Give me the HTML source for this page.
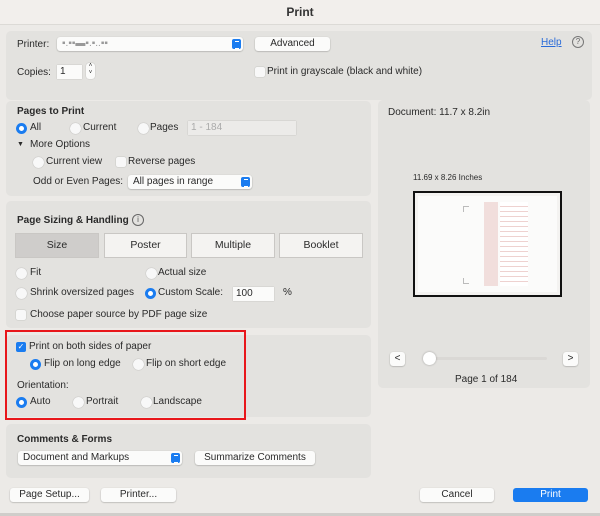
<!DOCTYPE html>
<html><head><meta charset="utf-8"><style>
*{box-sizing:border-box;margin:0;padding:0}
body{width:600px;height:516px;background:#eceae7;font-family:"Liberation Sans",sans-serif;font-size:10px;color:#2a2a2a;position:relative;overflow:hidden}
.a{position:absolute;white-space:nowrap}
.title{left:0;top:0;width:600px;height:25px;background:#f2efec;border-bottom:1px solid #dcdad6;text-align:center;line-height:24px;font-size:12px;font-weight:bold;color:#333}
.p{position:absolute;background:#e3e2df;border-radius:5px}
.b{font-weight:bold}
.btn{position:absolute;background:#fbfbfa;border-radius:3px;box-shadow:0 0.5px 1.5px rgba(0,0,0,.3);text-align:center;line-height:14px;height:14px}
.r{position:absolute;width:11px;height:11px;border-radius:50%;background:#f8f8f8;box-shadow:0 0 1px rgba(0,0,0,.35)}
.r.on{background:#fff;border:3.5px solid #1a7cf0;box-shadow:none}
.cb{position:absolute;width:10px;height:10px;border-radius:2px;background:#f8f8f8;box-shadow:0 0 1px rgba(0,0,0,.35)}
.inp{position:absolute;background:#fbfbfa;height:14px;line-height:14px;padding-left:3px;box-shadow:0 0 1px rgba(0,0,0,.25)}
.sel{position:absolute;background:#fbfbfa;border-radius:3px;height:14px;line-height:14px;padding-left:5px;box-shadow:0 0.5px 1.5px rgba(0,0,0,.3)}
.sel i{position:absolute;right:2px;top:2px;width:9px;height:10px;background:#1a7cf0;border-radius:2px}
.sel i:after{content:"";position:absolute;left:2.5px;top:2px;width:4px;height:6px;border-top:1px solid #fff;border-bottom:1px solid #fff}
.seg{position:absolute;top:233px;height:25px;background:#f4f3f1;border:1px solid #c9c7c4;text-align:center;line-height:23px;font-size:10.5px}
</style></head><body>
<div class="a title">Print</div>

<div class="p" style="left:6px;top:31px;width:586px;height:69px"></div>
<div class="a" style="left:17px;top:39px">Printer:</div>
<div class="sel" style="left:57px;top:37px;width:186px;color:#999">▪.▪▪▬▪.▪..▪▪<i></i></div>
<div class="btn" style="left:255px;top:37px;width:75px">Advanced</div>
<div class="a" style="left:541px;top:37px;color:#2a6bd8;text-decoration:underline">Help</div>
<div class="a" style="left:572px;top:36px;width:12px;height:12px;border:1px solid #777;border-radius:50%;font-size:8px;text-align:center;line-height:10px;color:#666">?</div>
<div class="a" style="left:17px;top:67px">Copies:</div>
<div class="inp" style="left:57px;top:65px;width:25px">1</div>
<div class="a" style="left:86px;top:63px;width:9px;height:16px;background:#fbfbfa;border-radius:3px;font-size:6px;line-height:7px;text-align:center;box-shadow:0 0 1px rgba(0,0,0,.3)">˄<br>˅</div>
<div class="cb" style="left:255px;top:67px"></div>
<div class="a" style="left:267px;top:66px">Print in grayscale (black and white)</div>

<div class="p" style="left:6px;top:101px;width:365px;height:95px"></div>
<div class="a b" style="left:17px;top:106px">Pages to Print</div>
<div class="r on" style="left:16px;top:123px"></div><div class="a" style="left:30px;top:122px">All</div>
<div class="r" style="left:70px;top:123px"></div><div class="a" style="left:83px;top:122px">Current</div>
<div class="r" style="left:138px;top:123px"></div><div class="a" style="left:150px;top:122px">Pages</div>
<div class="inp" style="left:188px;top:121px;width:108px;color:#aaa;background:#ecebe9">1 - 184</div>
<div class="a" style="left:17px;top:141px;font-size:7px">▼</div><div class="a" style="left:30px;top:139px">More Options</div>
<div class="r" style="left:33px;top:157px"></div><div class="a" style="left:46px;top:156px">Current view</div>
<div class="cb" style="left:116px;top:157px"></div><div class="a" style="left:128px;top:156px">Reverse pages</div>
<div class="a" style="left:33px;top:176px">Odd or Even Pages:</div>
<div class="sel" style="left:128px;top:175px;width:124px">All pages in range<i></i></div>

<div class="p" style="left:378px;top:100px;width:212px;height:288px"></div>
<div class="a" style="left:388px;top:107px">Document: 11.7 x 8.2in</div>
<div class="a" style="left:413px;top:173px;font-size:8px">11.69 x 8.26 Inches</div>
<div class="a" style="left:413px;top:191px;width:149px;height:106px;border:2px solid #111;background:#f4f3f1;padding:3px">
 <div style="width:100%;height:100%;background:#fbfbfa;position:relative">
  <div style="position:absolute;left:45px;top:10px;width:6px;height:6px;border-left:1px solid #bbb;border-top:1px solid #bbb"></div>
  <div style="position:absolute;left:45px;top:82px;width:6px;height:6px;border-left:1px solid #bbb;border-bottom:1px solid #bbb"></div>
  <div style="position:absolute;left:66px;top:6px;width:14px;height:84px;background:#f1dedc"></div>
  <div style="position:absolute;left:82px;top:6px;width:28px;height:84px;background:repeating-linear-gradient(#fff 0 4px,#eed2d0 4px 5px)"></div>
 </div></div>
<div class="btn" style="left:390px;top:352px;width:15px">&lt;</div>
<div class="a" style="left:425px;top:357px;width:122px;height:3px;background:#dad8d5;border-radius:2px"></div>
<div class="a" style="left:423px;top:352px;width:13px;height:13px;border-radius:50%;background:#fff;box-shadow:0 0 2px rgba(0,0,0,.3)"></div>
<div class="btn" style="left:563px;top:352px;width:15px">&gt;</div>
<div class="a" style="left:455px;top:374px">Page 1 of 184</div>

<div class="p" style="left:6px;top:201px;width:365px;height:127px"></div>
<div class="a b" style="left:17px;top:215px">Page Sizing &amp; Handling</div>
<div class="a" style="left:132px;top:214px;width:12px;height:12px;border:1px solid #666;border-radius:50%;font-size:8px;text-align:center;line-height:10px;color:#555">i</div>
<div class="seg" style="left:15px;width:84px;background:#cfcdcb">Size</div>
<div class="seg" style="left:104px;width:83px">Poster</div>
<div class="seg" style="left:191px;width:84px">Multiple</div>
<div class="seg" style="left:279px;width:84px">Booklet</div>
<div class="r" style="left:16px;top:268px"></div><div class="a" style="left:30px;top:267px">Fit</div>
<div class="r" style="left:146px;top:268px"></div><div class="a" style="left:158px;top:267px">Actual size</div>
<div class="r" style="left:16px;top:288px"></div><div class="a" style="left:30px;top:287px">Shrink oversized pages</div>
<div class="r on" style="left:145px;top:288px"></div><div class="a" style="left:158px;top:287px">Custom Scale:</div>
<div class="inp" style="left:233px;top:287px;width:41px">100</div>
<div class="a" style="left:283px;top:287px">%</div>
<div class="cb" style="left:16px;top:310px"></div><div class="a" style="left:30px;top:309px">Choose paper source by PDF page size</div>

<div class="p" style="left:6px;top:335px;width:365px;height:82px"></div>
<div class="a" style="left:5px;top:330px;width:241px;height:90px;border:2px solid #e8161b"></div>
<div class="a" style="left:16px;top:342px;width:10px;height:10px;border-radius:2px;background:#1a7cf0;color:#fff;font-size:8px;line-height:10px;text-align:center">✓</div>
<div class="a" style="left:29px;top:341px">Print on both sides of paper</div>
<div class="r on" style="left:30px;top:359px"></div><div class="a" style="left:44px;top:358px">Flip on long edge</div>
<div class="r" style="left:133px;top:359px"></div><div class="a" style="left:146px;top:358px">Flip on short edge</div>
<div class="a" style="left:17px;top:380px">Orientation:</div>
<div class="r on" style="left:16px;top:397px"></div><div class="a" style="left:30px;top:396px">Auto</div>
<div class="r" style="left:73px;top:397px"></div><div class="a" style="left:86px;top:396px">Portrait</div>
<div class="r" style="left:141px;top:397px"></div><div class="a" style="left:153px;top:396px">Landscape</div>

<div class="p" style="left:6px;top:424px;width:365px;height:54px"></div>
<div class="a b" style="left:17px;top:434px">Comments &amp; Forms</div>
<div class="sel" style="left:18px;top:451px;width:164px">Document and Markups<i></i></div>
<div class="btn" style="left:195px;top:451px;width:120px">Summarize Comments</div>

<div class="btn" style="left:10px;top:488px;width:79px">Page Setup...</div>
<div class="btn" style="left:101px;top:488px;width:75px">Printer...</div>
<div class="btn" style="left:420px;top:488px;width:74px">Cancel</div>
<div class="btn" style="left:513px;top:488px;width:75px;background:#1a7cf0;color:#fff;box-shadow:none">Print</div>
<div class="a" style="left:0;top:513px;width:600px;height:3px;background:#cfcdca"></div>
</body></html>
